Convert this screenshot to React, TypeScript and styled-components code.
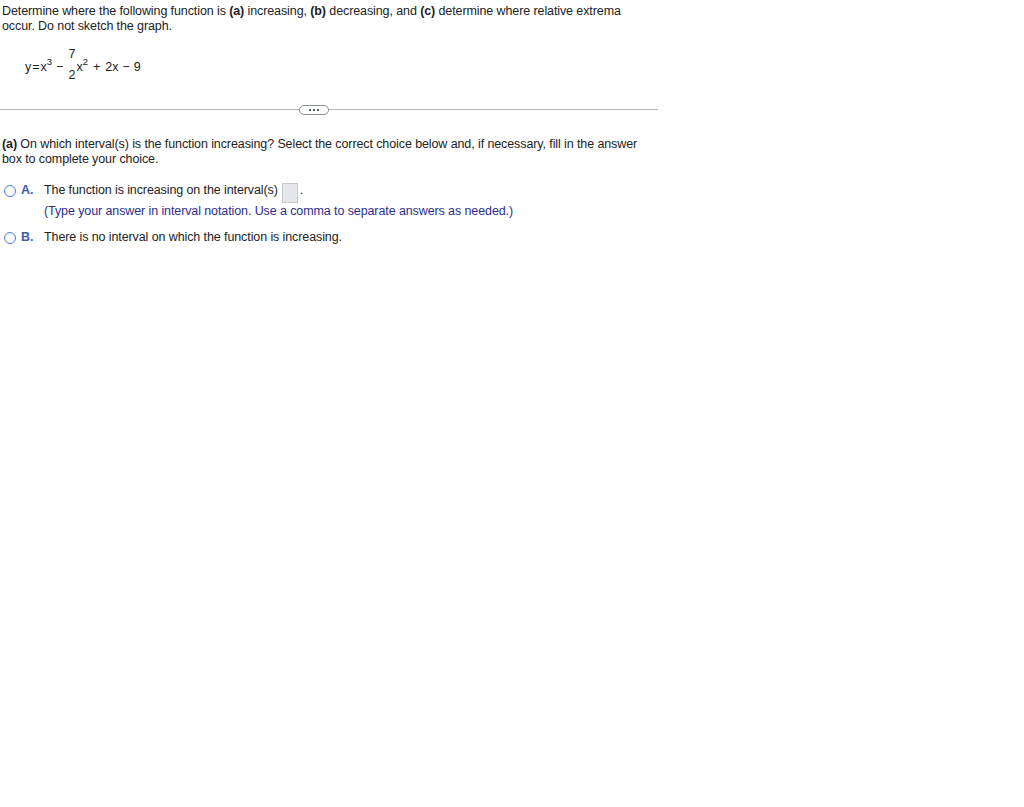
import React from 'react';
import styled, { createGlobalStyle } from 'styled-components';

const Global = createGlobalStyle`
  body {
    margin: 0;
    background: #ffffff;
    font-family: "Liberation Sans", Arial, sans-serif;
    font-size: 12.5px;
    letter-spacing: -0.1px;
    color: #222;
  }
`;

const Page = styled.div`
  width: 658px;
`;

const Prompt = styled.p`
  margin: 0;
  padding: 4px 0 0 2px;
  line-height: 15px;
  width: 648px;
`;

const Equation = styled.div`
  display: flex;
  align-items: flex-end;
  margin-top: 16px;
  padding-left: 25px;
  height: 25px;
  line-height: 15px;
  letter-spacing: 0;
`;

const Expr = styled.span`
  white-space: nowrap;
`;

const Sup = styled.sup`
  font-size: 9.5px;
  line-height: 0;
  vertical-align: 6px;
`;

const Frac = styled.span`
  display: inline-flex;
  flex-direction: column;
  align-items: center;
  gap: 10px;
  line-height: 11px;
  margin: 0 1px -6px 1px;
`;

const Op = styled.span<{ gap?: number }>`
  margin: 0 ${(p) => p.gap ?? 3}px;
`;

const Divider = styled.div`
  margin-top: 34px;
  height: 1px;
  background: #b5b5b5;
  display: flex;
  align-items: center;
  padding-left: 299px;
`;

const MoreButton = styled.div`
  width: 28px;
  height: 8px;
  border: 1px solid #8a8f99;
  border-radius: 5px;
  background: #fff;
  display: flex;
  align-items: center;
  justify-content: center;
  gap: 2px;
`;

const Dot = styled.span`
  width: 2px;
  height: 2px;
  background: #555d70;
`;

const Question = styled.p`
  margin: 0;
  padding: 27px 0 0 2px;
  line-height: 15px;
  width: 648px;
`;

const Choices = styled.div`
  padding: 16px 0 0 4px;
  display: flex;
  flex-direction: column;
  gap: 11px;
`;

const Choice = styled.div`
  display: flex;
  align-items: flex-start;
`;

const Radio = styled.span`
  width: 10px;
  height: 10px;
  border: 1px solid #4b7bd0;
  border-radius: 50%;
  margin-top: 2px;
  flex: none;
`;

const Letter = styled.span`
  color: #3b5ca8;
  font-weight: bold;
  width: 23px;
  padding-left: 5px;
  line-height: 15px;
  flex: none;
`;

const Body = styled.div`
  display: flex;
  flex-direction: column;
  gap: 6px;
  line-height: 15px;
`;

const Row = styled.span`
  display: flex;
  align-items: flex-start;
  height: 15px;
  white-space: pre;
`;

const AnswerBox = styled.span`
  width: 14px;
  height: 18px;
  margin: 0 2px 0 4px;
  border: 1px solid #c4c8cf;
  background: #e6e7ea;
  flex: none;
`;

const Hint = styled.span`
  color: #2e2e8a;
`;

const App: React.FC = () => (
  <Page>
    <Global />
    <Prompt>
      Determine where the following function is <b>(a)</b> increasing, <b>(b)</b> decreasing, and{' '}
      <b>(c)</b> determine where relative extrema occur. Do not sketch the graph.
    </Prompt>
    <Equation>
      <Expr>
        y<Op gap={1}>=</Op>x<Sup>3</Sup>
        <Op gap={4}>−</Op>
      </Expr>
      <Frac>
        <span>7</span>
        <span>2</span>
      </Frac>
      <Expr>
        x<Sup>2</Sup>
        <Op gap={5}>+</Op>2x<Op gap={4}>−</Op>9
      </Expr>
    </Equation>
    <Divider>
      <MoreButton>
        <Dot />
        <Dot />
        <Dot />
      </MoreButton>
    </Divider>
    <Question>
      <b>(a)</b> On which interval(s) is the function increasing? Select the correct choice below and, if
      necessary, fill in the answer box to complete your choice.
    </Question>
    <Choices>
      <Choice>
        <Radio />
        <Letter>A.</Letter>
        <Body>
          <Row>
            The function is increasing on the interval(s)
            <AnswerBox />.
          </Row>
          <Hint>(Type your answer in interval notation. Use a comma to separate answers as needed.)</Hint>
        </Body>
      </Choice>
      <Choice>
        <Radio />
        <Letter>B.</Letter>
        <Body>There is no interval on which the function is increasing.</Body>
      </Choice>
    </Choices>
  </Page>
);

export default App;
